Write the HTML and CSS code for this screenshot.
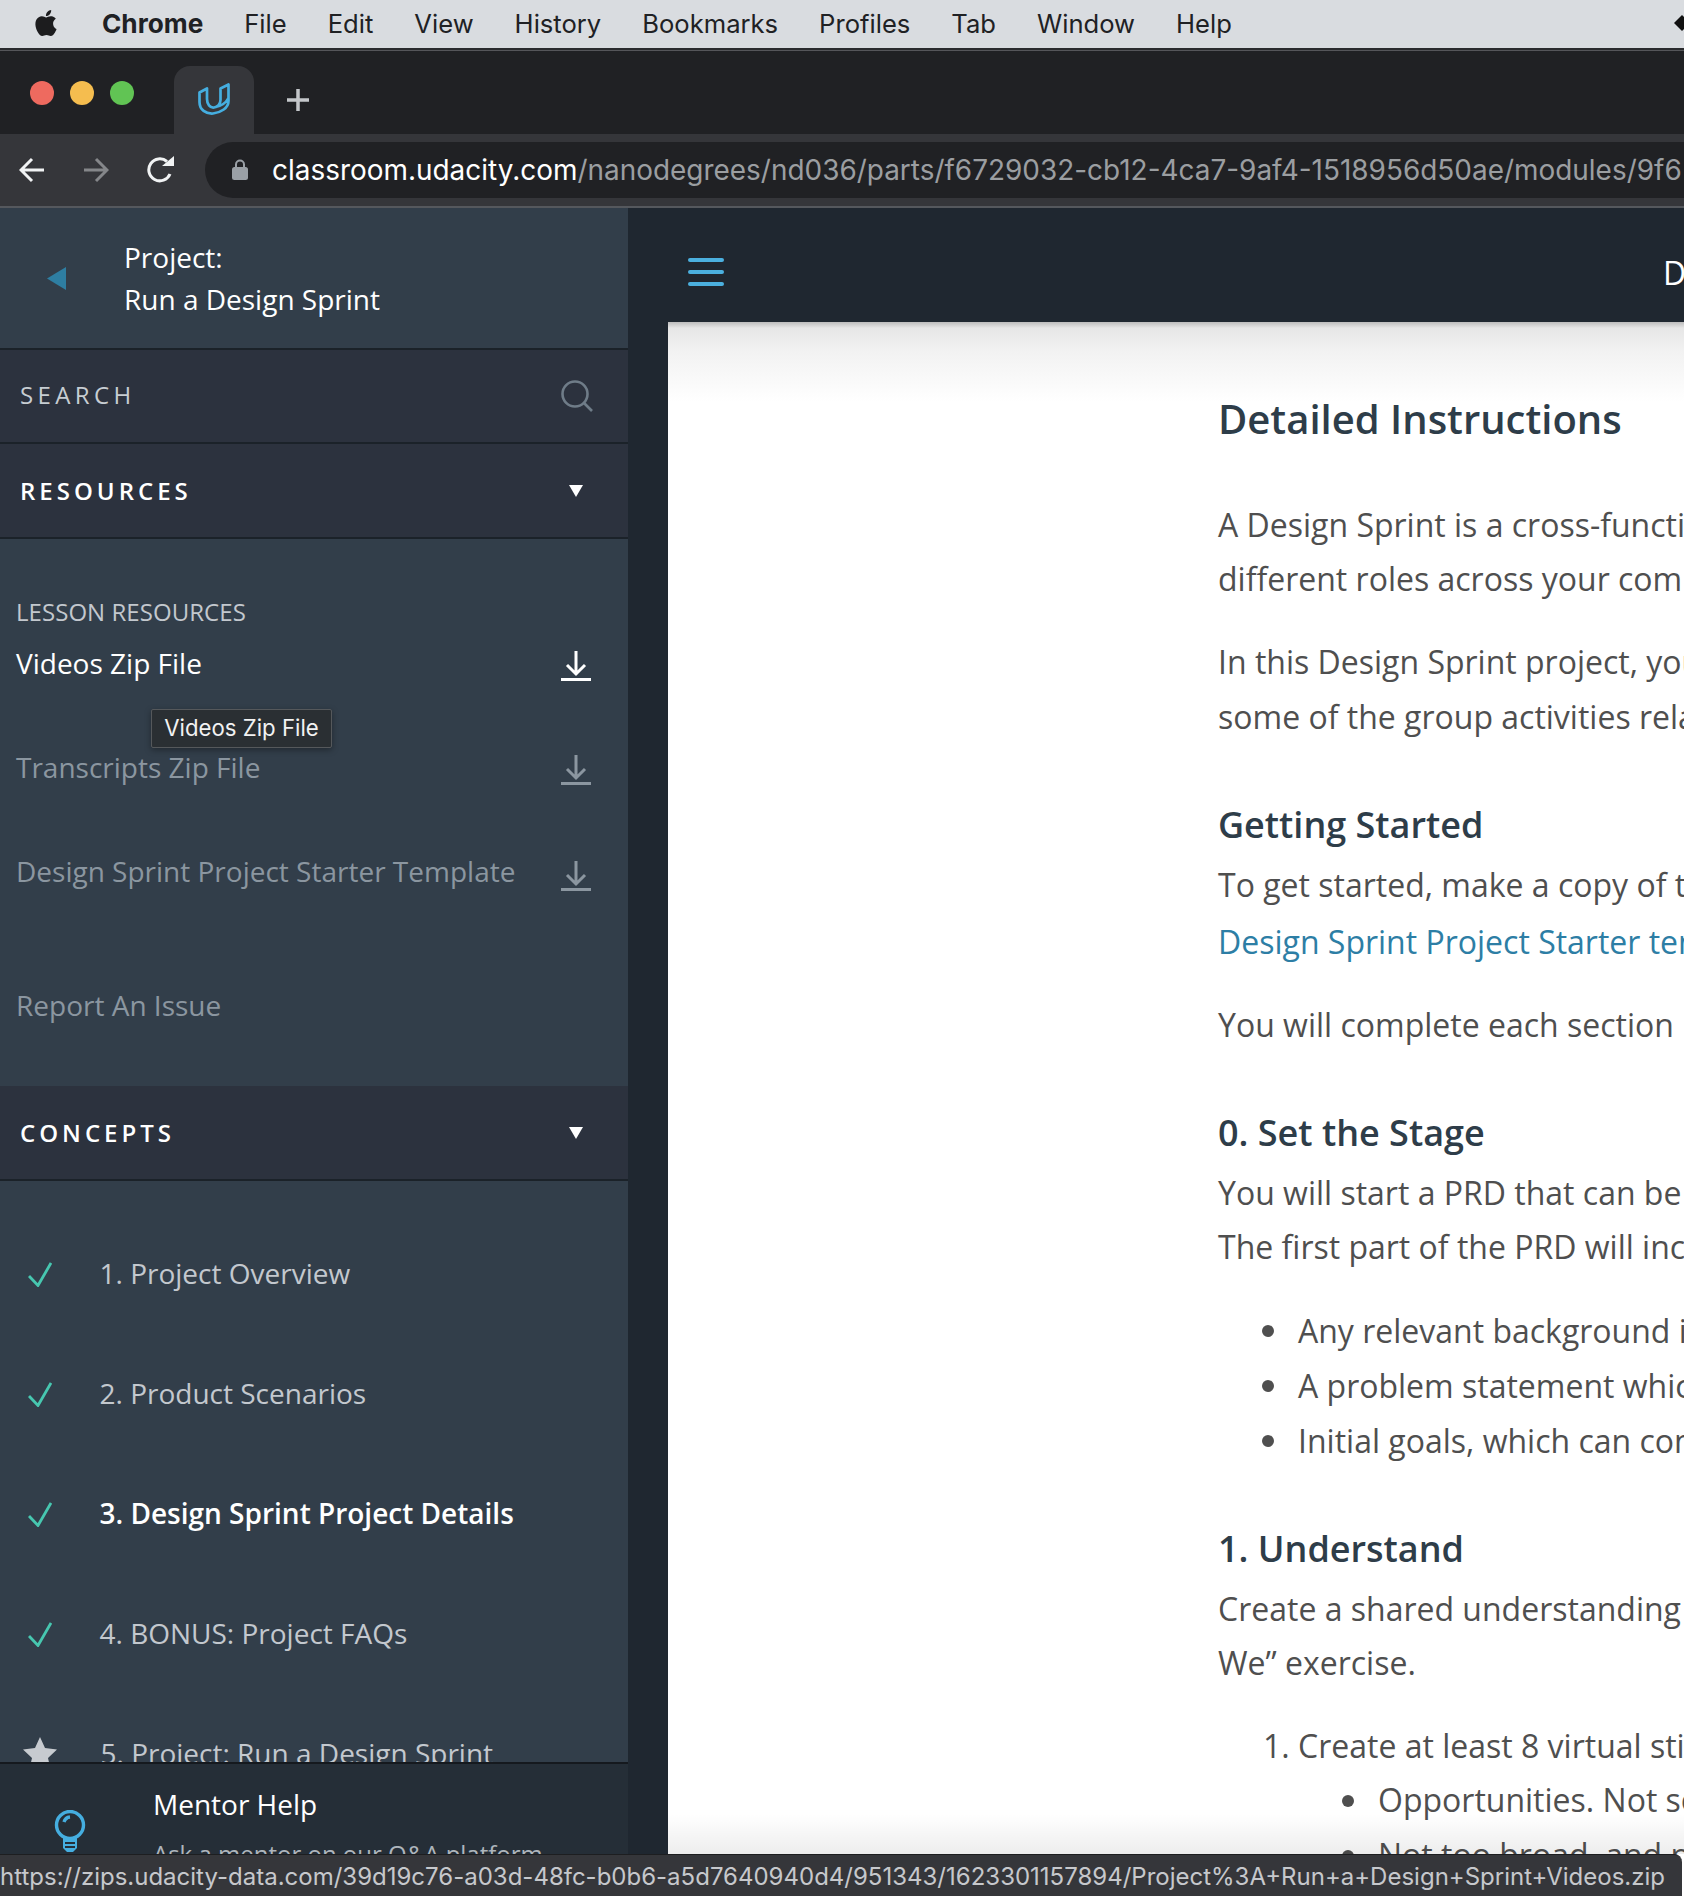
FILE: index.html
```html
<!DOCTYPE html>
<html lang="en">
<head>
<meta charset="utf-8">
<title>Project: Run a Design Sprint</title>
<link rel="stylesheet" href="styles.css">
</head>
<body>
<header class="menubar">
  <svg class="apple" viewBox="0 0 24 24"><path d="M12.152 6.896c-.948 0-2.415-1.078-3.96-1.04-2.04.027-3.91 1.183-4.961 3.014-2.117 3.675-.546 9.103 1.519 12.09 1.013 1.454 2.208 3.09 3.792 3.039 1.52-.065 2.09-.987 3.935-.987 1.831 0 2.35.987 3.96.948 1.637-.026 2.676-1.48 3.676-2.948 1.156-1.688 1.636-3.325 1.662-3.415-.039-.013-3.182-1.221-3.22-4.857-.026-3.04 2.48-4.494 2.597-4.559-1.429-2.09-3.623-2.324-4.39-2.376-2-.156-3.675 1.09-4.61 1.09zM15.53 3.83c.843-1.012 1.4-2.427 1.245-3.83-1.207.052-2.662.805-3.532 1.818-.78.896-1.454 2.338-1.273 3.714 1.338.104 2.715-.688 3.559-1.701"/></svg>
  <span class="menu-app">Chrome</span>
  <span>File</span><span>Edit</span><span>View</span><span>History</span><span>Bookmarks</span><span>Profiles</span><span>Tab</span><span>Window</span><span>Help</span>
  <svg class="menu-extra" viewBox="0 0 20 20"><path d="M10 0 L20 10 L10 20 L0 10 Z"/></svg>
</header>
<section class="browser">
  <div class="tabstrip">
    <div class="lights"><i class="light red"></i><i class="light amber"></i><i class="light green"></i></div>
    <div class="tab">
      <svg class="tab-logo" viewBox="0 0 32 32"><path d="M1.5 9.5 L9 5.5 V16 C9 21 12 25 16 24.5 C19.5 24 22.5 21 22.5 17 V5.5 L30.5 1.5 V18 C30.5 25 23 29.5 15 30.5 C8 31 1.5 27 1.5 19 Z M30.5 15 C28 20 22 23.5 16 24.5" fill="none" stroke-width="2.7" stroke-linejoin="round"/></svg>
    </div>
    <svg class="newtab" viewBox="0 0 24 24"><path d="M12 1 V23 M1 12 H23"/></svg>
  </div>
  <div class="toolbar">
    <svg class="nav-icon" viewBox="0 0 26 26"><path d="M25 13 H2 M13 2 L2 13 L13 24"/></svg>
    <svg class="nav-icon dim" viewBox="0 0 26 26"><path d="M1 13 H24 M13 2 L24 13 L13 24"/></svg>
    <svg class="nav-icon reload" viewBox="0 0 28 28"><path d="M23 18 A11 11 0 1 1 20 5.5"/><path class="fillwhite" d="M15 10 L27 10 L27 0 Z"/></svg>
    <div class="omnibox">
      <svg class="lock" viewBox="0 0 16 21"><path d="M4 9 V5.5 A4 4 0 0 1 12 5.5 V9" fill="none" stroke="#9aa0a6" stroke-width="2"/><rect y="8" width="16" height="13" rx="2.5" fill="#9aa0a6"/></svg>
      <span class="url"><b class="url-host">classroom.udacity.com</b>/nanodegrees/nd036/parts/f6729032-cb12-4ca7-9af4-1518956d50ae/modules/9f6</span>
    </div>
  </div>
</section>
<main class="app">
  <aside class="sidebar">
    <div class="sidebar-scroll">
      <div class="side-head">
        <svg class="back-tri" viewBox="0 0 19 23"><path d="M19 0 V23 L0 11.5 Z"/></svg>
        <div class="side-title">Project:<br>Run a Design Sprint</div>
      </div>
      <div class="band search-band">
        <span class="band-label dimmed">SEARCH</span>
        <svg class="search-icon" viewBox="0 0 32 32"><circle cx="14" cy="14" r="12.5"/><path d="M23 23 L31 31"/></svg>
      </div>
      <div class="band">
        <span class="band-label">RESOURCES</span>
        <i class="caret"></i>
      </div>
      <section class="resources">
        <div class="res-title">LESSON RESOURCES</div>
        <div class="res-item active">
          <span>Videos Zip File</span>
          <svg class="dl" viewBox="0 0 30 30"><path d="M15 0 V22 M6 14 L15 23 L24 14 M0 28.5 H30"/></svg>
          <div class="tooltip">Videos Zip File</div>
        </div>
        <div class="res-item">
          <span>Transcripts Zip File</span>
          <svg class="dl" viewBox="0 0 30 30"><path d="M15 0 V22 M6 14 L15 23 L24 14 M0 28.5 H30"/></svg>
        </div>
        <div class="res-item">
          <span>Design Sprint Project Starter Template</span>
          <svg class="dl low" viewBox="0 0 30 30"><path d="M15 0 V22 M6 14 L15 23 L24 14 M0 28.5 H30"/></svg>
        </div>
        <div class="res-item report"><span>Report An Issue</span></div>
      </section>
      <div class="band">
        <span class="band-label">CONCEPTS</span>
        <i class="caret"></i>
      </div>
      <ol class="concepts">
        <li class="concept"><svg class="check" viewBox="0 0 24 25"><path d="M1 14 L10 23.5 L23 1"/></svg><span>1. Project Overview</span></li>
        <li class="concept"><svg class="check" viewBox="0 0 24 25"><path d="M1 14 L10 23.5 L23 1"/></svg><span>2. Product Scenarios</span></li>
        <li class="concept current"><svg class="check" viewBox="0 0 24 25"><path d="M1 14 L10 23.5 L23 1"/></svg><span>3. Design Sprint Project Details</span></li>
        <li class="concept"><svg class="check" viewBox="0 0 24 25"><path d="M1 14 L10 23.5 L23 1"/></svg><span>4. BONUS: Project FAQs</span></li>
        <li class="concept"><svg class="star" viewBox="0 0 34 32"><path d="M17 0 L22 11 L34 12.5 L25 21 L27.5 32 L17 26.5 L6.5 32 L9 21 L0 12.5 L12 11 Z"/></svg><span>5. Project: Run a Design Sprint</span></li>
      </ol>
    </div>
    <footer class="mentor">
      <svg class="bulb" viewBox="0 0 32 42"><circle cx="16" cy="15" r="13.5" class="bulb-line"/><path class="bulb-line" d="M10 12 A7 7 0 0 1 16 7"/><path class="bulb-base" d="M9 28 H23 V38 L19 42 H13 L9 38 Z"/><path class="bulb-gap" d="M11 33 H21 M11 37 H21"/></svg>
      <div class="mentor-text">
        <div class="mentor-title">Mentor Help</div>
        <div class="mentor-sub">Ask a mentor on our Q&amp;A platform</div>
      </div>
    </footer>
  </aside>
  <div class="stage">
    <div class="topbar">
      <div class="burger"><i></i><i></i><i></i></div>
      <span class="topbar-title">D</span>
    </div>
    <article class="doc">
      <h2>Detailed Instructions</h2>
      <p>A Design Sprint is a cross-functional<br>different roles across your company</p>
      <p>In this Design Sprint project, you<br>some of the group activities related</p>
      <h3>Getting Started</h3>
      <p>To get started, make a copy of the<br><a class="doc-link">Design Sprint Project Starter template</a></p>
      <p>You will complete each section</p>
      <h3>0. Set the Stage</h3>
      <p>You will start a PRD that can be<br>The first part of the PRD will include</p>
      <ul>
        <li>Any relevant background information</li>
        <li>A problem statement which</li>
        <li>Initial goals, which can come</li>
      </ul>
      <h3>1. Understand</h3>
      <p>Create a shared understanding<br>We” exercise.</p>
      <ol>
        <li>Create at least 8 virtual sticky
          <ul>
            <li>Opportunities. Not so</li>
            <li>Not too broad, and not</li>
          </ul>
        </li>
      </ol>
    </article>
  </div>
</main>
<div class="statusbar">https://zips.udacity-data.com/39d19c76-a03d-48fc-b0b6-a5d7640940d4/951343/1623301157894/Project%3A+Run+a+Design+Sprint+Videos.zip</div>
</body>
</html>
```
FILE: styles.css
```css
* { box-sizing: border-box; }
html, body { margin: 0; height: 100%; }
body {
  width: 1684px; height: 1896px; overflow: hidden; position: relative;
  display: flex; flex-direction: column;
  font-family: "Open Sans", "Noto Sans", sans-serif; background: #1f2730;
}
/* menu bar */
.menubar {
  height: 50px; flex: none; display: flex; align-items: center; gap: 41px;
  padding: 0 0 2px 33px; background: #d9dce0; border-bottom: 2px solid #2a2b2e;
  font: 400 25.6px Inter, "Liberation Sans", sans-serif; color: #202124; overflow: hidden;
}
.apple { width: 26px; height: 32px; flex: none; margin-right: 2px; fill: #1c1c1e; }
.menu-app { font-size: 26.2px; font-weight: 700; }
.menu-extra { width: 16px; height: 16px; margin-left: auto; margin-right: -6px; flex: none; fill: #111; }
/* browser chrome */
.browser { flex: none; background: #202124; border-top: 1px solid #55565a; }
.tabstrip { height: 83px; display: flex; align-items: flex-start; padding-left: 30px; }
.lights { display: flex; gap: 16px; margin-top: 30px; }
.light { width: 24px; height: 24px; border-radius: 50%; display: block; }
.red { background: #ee6a5f; } .amber { background: #f5bd4f; } .green { background: #61c454; }
.tab {
  width: 80px; height: 68px; margin: 15px 0 0 40px; background: #35363a;
  border-radius: 16px 16px 0 0; display: flex; align-items: center; justify-content: center; padding-bottom: 3px;
}
.tab-logo { width: 32px; height: 32px; stroke: #45aee0; }
.newtab { width: 24px; height: 24px; margin: 37px 0 0 32px; stroke: #c4c7ca; stroke-width: 3.5; fill: none; }
.toolbar {
  height: 74px; background: #35363a; display: flex; align-items: center; gap: 38px;
  padding: 0 0 1px 19px; border-bottom: 2px solid #55585d; overflow: hidden;
}
.nav-icon { width: 26px; height: 26px; flex: none; fill: none; stroke: #f1f3f4; stroke-width: 3; }
.nav-icon.dim { stroke: #85878a; }
.nav-icon.reload { width: 28px; height: 28px; }
.fillwhite { fill: #f1f3f4; stroke: none; }
.omnibox {
  flex: none; width: 1600px; height: 56px; margin-left: -8px; padding-left: 27px;
  display: flex; align-items: center; gap: 24px;
  background: #202124; border-radius: 28px 0 0 28px; overflow: hidden;
}
.lock { width: 16px; height: 21px; flex: none; }
.url { font: 400 27.95px Inter, "Liberation Sans", sans-serif; color: #9b9ea1; white-space: nowrap; }
.url-host { font-weight: 400; color: #fff; }
/* app */
.app { flex: 1; min-height: 0; display: flex; overflow: hidden; }
.sidebar { width: 628px; flex: none; display: flex; flex-direction: column; background: #323e4a; }
.sidebar-scroll { height: 1554px; flex: none; overflow: hidden; }
.side-head {
  height: 142px; display: flex; align-items: center; gap: 58px; padding-left: 47px;
  border-bottom: 2px solid #1b2229; font-size: 28px; line-height: 42px; color: #fff;
}
.back-tri { width: 19px; height: 23px; fill: #2e7ea2; flex: none; }
.band {
  height: 95px; display: flex; align-items: center; justify-content: space-between;
  padding: 0 45px 0 20px; background: #2c323e; border-bottom: 2px solid #1b2229;
}
.band-label { font-size: 24px; font-weight: 600; letter-spacing: 4px; color: #fff; }
.band-label.dimmed { font-weight: 400; letter-spacing: 4.4px; color: #c7cdd2; }
.search-band { height: 94px; padding-bottom: 3px; padding-right: 35px; }
.search-icon { width: 32px; height: 32px; margin-top: 3px; fill: none; stroke: #6f7c88; stroke-width: 2.6; }
.caret { width: 0; height: 0; border-left: 7px solid transparent; border-right: 7px solid transparent; border-top: 12px solid #fff; display: block; }
.resources { padding: 56.5px 37px 55.5px 16px; }
.res-title { height: 32px; line-height: 32px; font-size: 24px; letter-spacing: .05px; color: #c3c8ce; }
.res-item {
  height: 48px; margin-top: 56px; display: flex; align-items: center; justify-content: space-between;
  position: relative; font-size: 28px; color: #8b96a0;
}
.res-item span { margin-bottom: 4px; }
.res-title + .res-item { margin-top: 13px; }
.res-item.active { color: #fff; }
.res-item.report { margin-top: 86px; }
.dl { width: 30px; height: 30px; fill: none; stroke: #8b96a0; stroke-width: 3; flex: none; margin-top: 2px; }
.dl.low { margin-top: 6px; }
.active .dl { stroke: #fff; }
.tooltip {
  position: absolute; left: 135px; top: 68px; width: 181px; height: 39px; padding-bottom: 1px;
  display: flex; align-items: center; justify-content: center;
  background: #2a2f33; border: 1px solid #55585b; border-radius: 2px;
  box-shadow: 0 2px 6px rgba(0,0,0,.35);
  font: 400 22.2px Inter, "Liberation Sans", sans-serif; color: #f2f2f2;
}
.concepts { list-style: none; margin: 0; padding: 32px 0 0; }
.concept { height: 120px; display: flex; align-items: center; font-size: 28px; color: #c3c8ce; }
.concept span { margin-left: 47.5px; }
.concept.current { font-weight: 600; color: #fff; }
.check { width: 24px; height: 25px; margin: 3px 0 0 28px; fill: none; stroke: #47c7b0; stroke-width: 2.8; flex: none; }
.star { width: 34px; height: 32px; margin-left: 23px; flex: none; fill: #c7cbd0; margin-right: -4px; }
.mentor {
  flex: 1; min-height: 0; display: flex; background: #252e37; border-top: 2px solid #15191e; overflow: hidden;
}
.bulb { width: 32px; height: 42px; margin: 46px 0 0 54px; flex: none; }
.bulb-line { fill: none; stroke: #45aee0; stroke-width: 3.4; }
.bulb-base { fill: #45aee0; }
.bulb-gap { stroke: #252e37; stroke-width: 1.8; fill: none; }
.mentor-text { margin-left: 67px; padding-top: 19.5px; }
.mentor-title { font-size: 28px; line-height: 40px; color: #fff; }
.mentor-sub { font-size: 24px; line-height: 30px; margin-top: 15px; color: #aeb5bc; white-space: nowrap; }
/* main */
.stage { flex: 1; min-width: 0; display: flex; flex-direction: column; background: #1f2730; }
.topbar {
  height: 114px; flex: none; display: flex; align-items: center; justify-content: space-between;
  background: #1f2730; padding: 14px 0 0 60px; color: #fff; overflow: hidden;
}
.burger { display: flex; flex-direction: column; gap: 8px; }
.burger i { display: block; width: 36px; height: 4px; border-radius: 2px; background: #4bb0df; }
.topbar-title { font-size: 32px; width: 21px; }
.doc {
  flex: 1; margin-left: 40px; padding: 69px 0 0 550px; background: #fff; overflow: hidden; position: relative;
  white-space: nowrap; color: #4f4f4f; font-size: 32px; line-height: 54.4px;
  background-image: linear-gradient(#bdbdbd, #e6e6e6 6px, #f2f2f2 30px, #fff 80px);
}
.doc::after {
  content: ""; position: absolute; left: 0; right: 0; bottom: 42px; height: 40px;
  background: linear-gradient(rgba(0,0,0,0), rgba(0,0,0,.07));
}
.doc h2 { margin: 0 0 51px; font-size: 40px; line-height: 56px; font-weight: 600; color: #2e3d49; }
.doc h3 { margin: 56px 0 7.5px; font-size: 36px; line-height: 50px; font-weight: 600; color: #2e3d49; }
.doc p { margin: 0 0 28.6px; }
.doc-link { display: block; margin-top: 2.6px; color: #2d7ea5; }
.doc ul, .doc ol { margin: 0; padding: 0 0 0 80px; }
.doc ol { margin-top: 1px; }
.doc ul { list-style: none; }
.doc > ul li { line-height: 55px; }
.doc li ul { padding-left: 80px; }
.doc ul li { position: relative; }
.doc ul li::before {
  content: ""; position: absolute; left: -36px; top: 22px; width: 12px; height: 12px;
  border-radius: 50%; background: #4f4f4f;
}
.statusbar {
  position: absolute; left: 0; bottom: 0; width: 1682px; height: 42px; padding-top: 1px;
  display: flex; align-items: center; background: #35363a; border-top: 1px solid #1d1e20; border-radius: 0 8px 0 0;
  font: 400 24px Inter, "Liberation Sans", sans-serif; color: #c6c8cc; white-space: nowrap;
}
```
